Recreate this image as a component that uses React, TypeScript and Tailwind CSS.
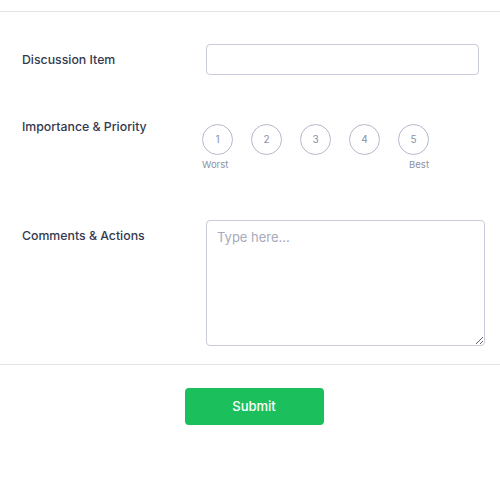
import React from 'react';

function Field({
  label,
  children,
  className,
}: {
  label: string;
  children: React.ReactNode;
  className?: string;
}) {
  return (
    <div className={`flex ${className ?? ''}`}>
      <div className="w-[206px] shrink-0 pl-[22px] text-[12.3px] leading-[20px] font-medium text-[#343a4e]">
        {label}
      </div>
      <div className="flex-1">{children}</div>
    </div>
  );
}

export default function App() {
  const scale = [1, 2, 3, 4, 5];
  return (
    <div
      className="h-[484px] w-[500px] bg-white"
      style={{ fontFamily: 'Inter, "Liberation Sans", sans-serif' }}
    >
      <div className="h-[12px] border-b border-[#e3e5ea]" />

      <Field label="Discussion Item" className="mt-[32px] items-center">
        <input
          type="text"
          className="block h-[31px] w-[273px] rounded-[4px] border border-[#c8cbd9] bg-white outline-none"
        />
      </Field>

      <Field label="Importance & Priority" className="mt-[42px] items-start">
        <div className="mt-[7px] ml-[-4px] w-[227px]">
          <div className="flex gap-[18px]">
            {scale.map((n) => (
              <div
                key={n}
                className="flex h-[31px] w-[31px] items-center justify-center rounded-full border border-[#b5b9cc] text-[10px] text-[#8b90a5]"
              >
                {n}
              </div>
            ))}
          </div>
          <div className="mt-[3px] flex justify-between text-[9.5px] leading-[14px] text-[#8b90a5]">
            <span>Worst</span>
            <span>Best</span>
          </div>
        </div>
      </Field>

      <Field label="Comments & Actions" className="mt-[54px] items-start">
        <textarea
          placeholder="Type here..."
          className="-mt-[6px] block h-[126px] w-[279px] rounded-[4px] border border-[#c8cbd9] px-[10px] py-[7px] text-[13px] text-[#2c3345] outline-none placeholder:text-[#a6aab9]"
        />
      </Field>

      <div className="mt-[18px] border-t border-[#e3e5ea]" />

      <div className="mt-[23px] flex justify-center pl-[8px]">
        <button
          type="button"
          className="h-[37px] w-[139px] rounded-[4px] bg-[#1bbf5c] text-[13px] font-medium text-white"
        >
          Submit
        </button>
      </div>
    </div>
  );
}
